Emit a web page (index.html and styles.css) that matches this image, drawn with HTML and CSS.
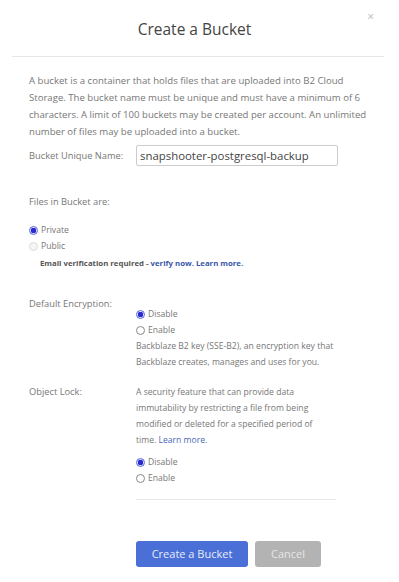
FILE: index.html
```html
<!DOCTYPE html>
<html>
<head>
<meta charset="utf-8">
<link rel="stylesheet" href="styles.css">
</head>
<body>
<div class="modal">
  <div class="header">
    <h1 class="title">Create a Bucket</h1>
    <span class="close">×</span>
  </div>
  <div class="body">
    <p class="intro">A bucket is a container that holds files that are uploaded into B2 Cloud Storage. The bucket name must be unique and must have a minimum of 6 characters. A limit of 100 buckets may be created per account. An unlimited number of files may be uploaded into a bucket.</p>
    <div class="row name-row">
      <span class="label">Bucket Unique Name:</span>
      <div class="input">snapshooter-postgresql-backup</div>
    </div>
    <div class="files-label">Files in Bucket are:</div>
    <div class="radios">
      <div class="radio"><span class="dot checked"></span>Private</div>
      <div class="radio"><span class="dot disabled"></span>Public</div>
    </div>
    <div class="verify">Email verification required - <span class="link">verify now.</span> <span class="link">Learn more.</span></div>

    <div class="row enc-row">
      <span class="label">Default Encryption:</span>
      <div class="col enc-col">
        <div class="radio"><span class="dot checked"></span>Disable</div>
        <div class="radio"><span class="dot"></span>Enable</div>
        <p class="desc">Backblaze B2 key (SSE-B2), an encryption key that Backblaze creates, manages and uses for you.</p>
      </div>
    </div>

    <div class="row lock-row">
      <span class="label">Object Lock:</span>
      <div class="col lock-col">
        <p class="desc">A security feature that can provide data immutability by restricting a file from being modified or deleted for a specified period of time. <span class="link-light">Learn more.</span></p>
        <div class="radios2">
          <div class="radio"><span class="dot checked"></span>Disable</div>
          <div class="radio"><span class="dot"></span>Enable</div>
        </div>
        <div class="rule"></div>
      </div>
    </div>

    <div class="buttons">
      <div class="btn primary">Create a Bucket</div>
      <div class="btn cancel">Cancel</div>
    </div>
  </div>
</div>
</body>
</html>
```
FILE: styles.css
```css
html, body {
  margin: 0;
  padding: 0;
  background: #fff;
}
body {
  font-family: "Open Sans", "Noto Sans", sans-serif;
  color: #777;
}
.modal {
  width: 399px;
  height: 582px;
  box-sizing: border-box;
}
.header {
  position: relative;
  margin: 0 15px 0 12px;
  padding-right: 7px;
  height: 57px;
  border-bottom: 1px solid #e6e6e6;
  box-sizing: border-box;
  display: flex;
  align-items: center;
  justify-content: center;
}
.title {
  margin: 2px 0 0 0;
  font-weight: 400;
  font-size: 15.5px;
  color: #444;
}
.close {
  position: absolute;
  right: 10px;
  top: 8px;
  font-size: 12px;
  color: #bbb;
}
.body {
  padding: 15px 0 0 29px;
}
.intro {
  margin: 0;
  font-size: 9.6px;
  line-height: 17px;
  width: 345px;
  color: #777;
}
.row {
  display: flex;
}
.label {
  width: 107px;
  flex: none;
  font-size: 9.3px;
  line-height: 16px;
  color: #777;
}
.name-row {
  margin-top: 5px;
  align-items: center;
}
.input {
  width: 202px;
  height: 21px;
  box-sizing: border-box;
  border: 1px solid #ccc;
  border-radius: 2px;
  padding: 0 0 0 3px;
  font-size: 11.4px;
  line-height: 19px;
  color: #444;
}
.files-label {
  margin-top: 28px;
  font-size: 9.3px;
  line-height: 16px;
}
.radios {
  margin-top: 12px;
}
.radio {
  display: flex;
  align-items: center;
  font-size: 8.6px;
  height: 16px;
  color: #777;
}
.dot {
  width: 7px;
  height: 7px;
  border: 1px solid #888;
  border-radius: 50%;
  margin-right: 3px;
  box-sizing: content-box;
  background: #fff;
}
.dot.checked {
  border-color: #5a6ad8;
  background: radial-gradient(circle, #2a2ad0 0 2.6px, #dfe2f8 3px);
}
.dot.disabled {
  border-color: #ddd;
  background: #f4f4f4;
}
.verify {
  margin: 4px 0 0 11px;
  font-size: 7.8px;
  line-height: 10px;
  font-weight: 700;
  color: #555;
}
.link {
  color: #3a58a8;
}
.link-light {
  color: #4a68b8;
}
.enc-row {
  margin-top: 28px;
}
.enc-col {
  padding-top: 10px;
}
.desc {
  margin: 0;
  font-size: 8.6px;
  line-height: 16px;
  width: 198px;
  color: #777;
}
.lock-row {
  margin-top: 14px;
}
.radios2 {
  margin-top: 6px;
}
.rule {
  width: 200px;
  margin-top: 13px;
  border-top: 1px solid #e6e6e6;
}
.buttons {
  display: flex;
  gap: 7px;
  margin: 41px 0 0 107px;
}
.btn {
  height: 26px;
  border-radius: 3px;
  font-size: 11px;
  line-height: 26px;
  text-align: center;
  color: #e8ecf8;
}
.primary {
  width: 112px;
  background: #4a6fd6;
}
.cancel {
  width: 66px;
  background: #b3b3b3;
  color: #e6e6e6;
}
```
